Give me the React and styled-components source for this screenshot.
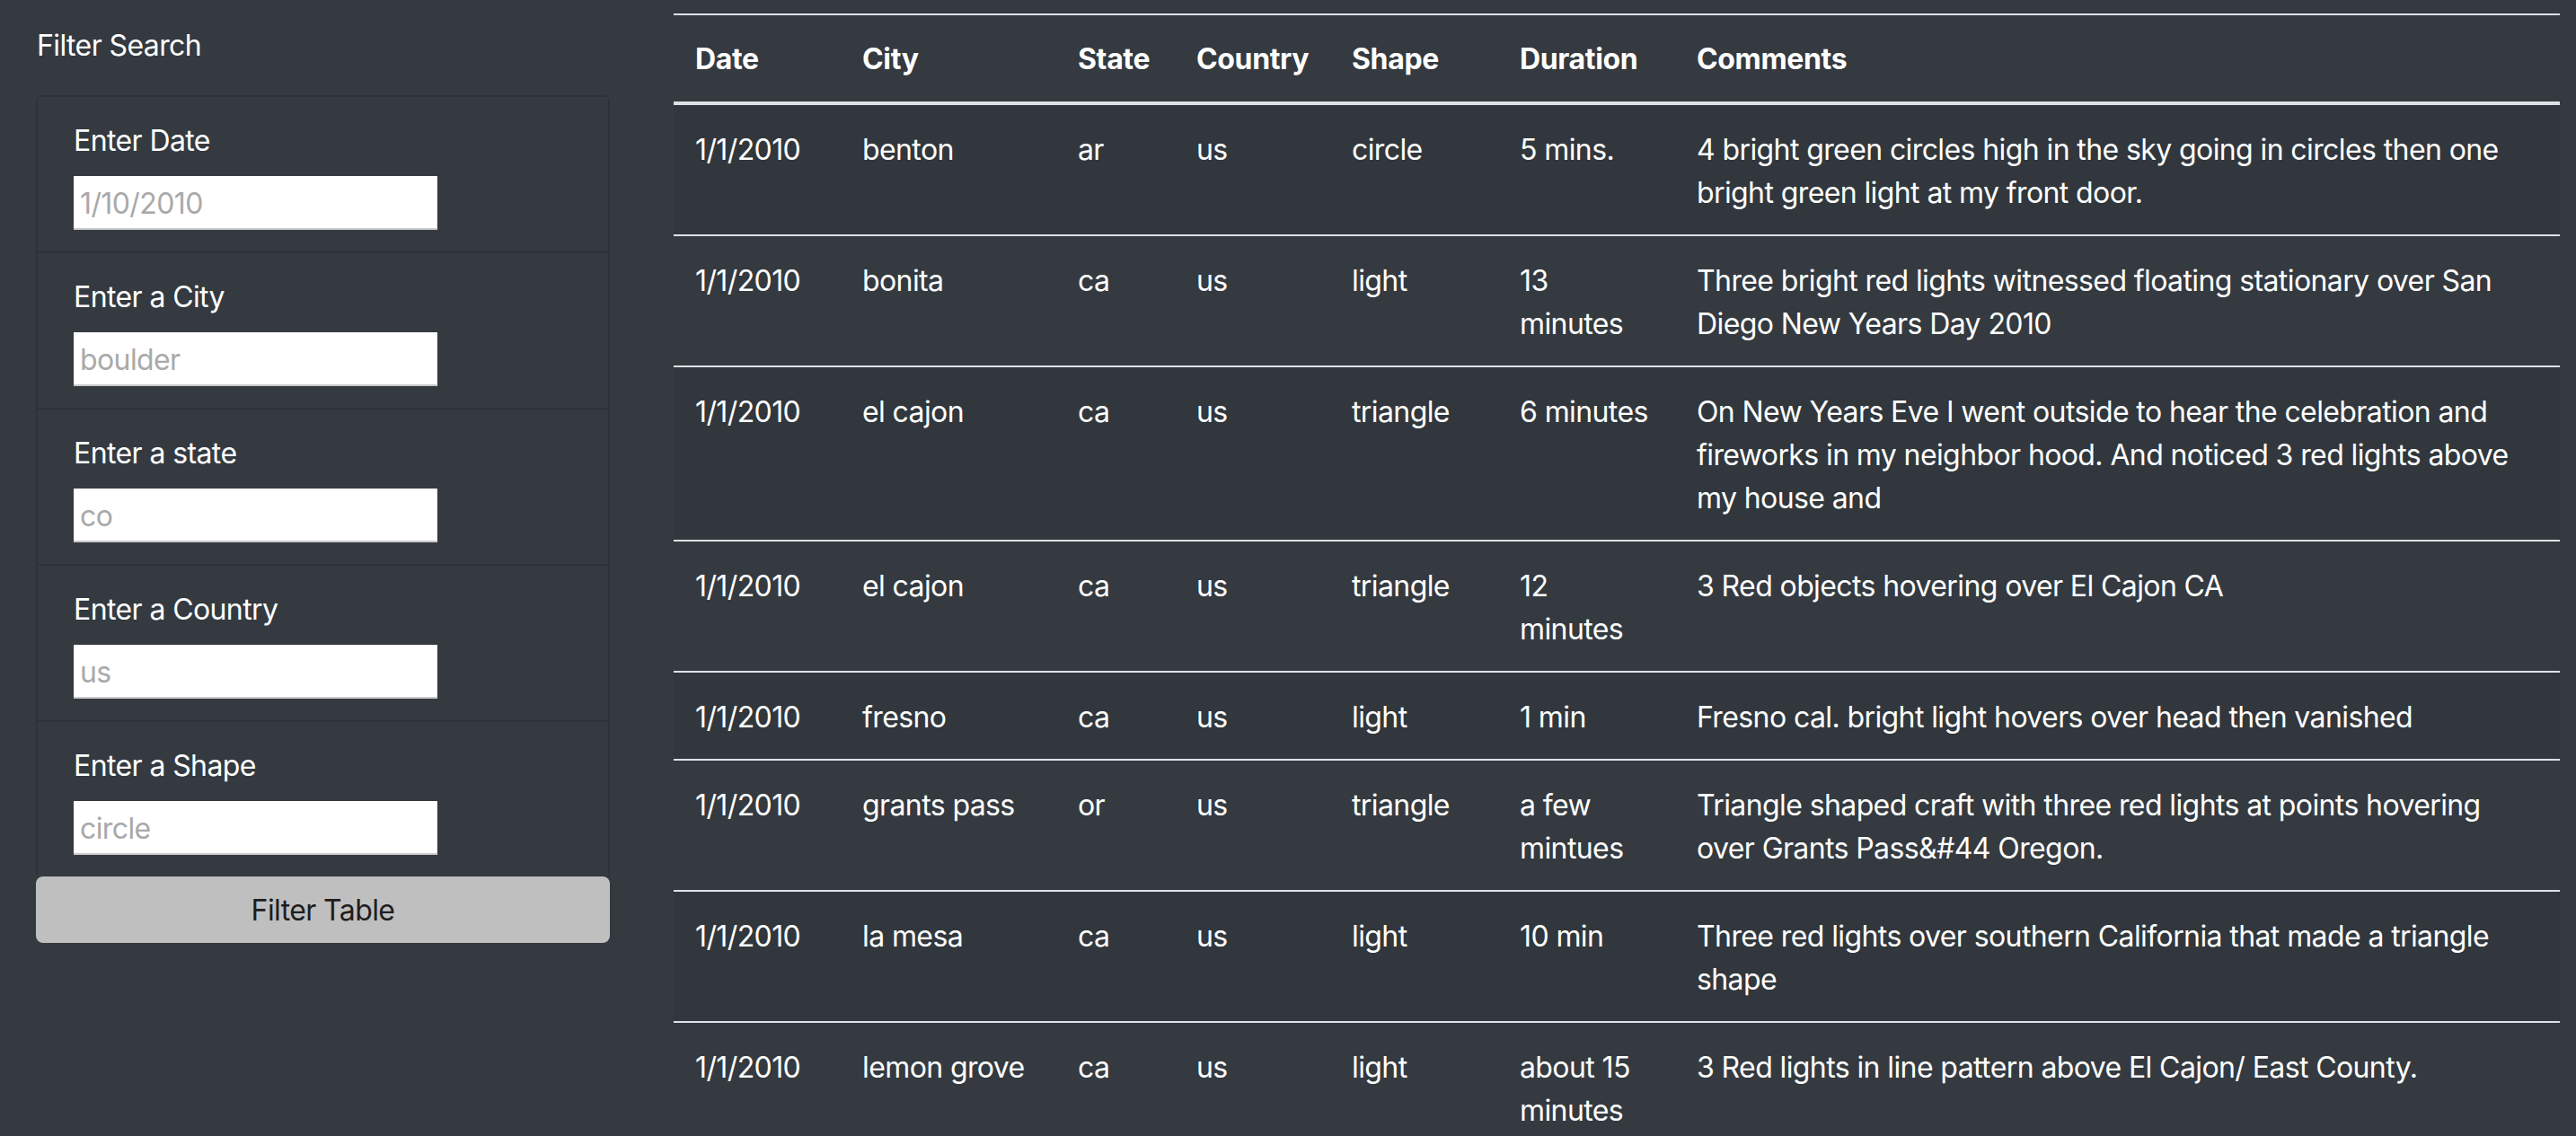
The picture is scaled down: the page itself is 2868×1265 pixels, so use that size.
import React from "react";
import styled, { createGlobalStyle } from "styled-components";

const GlobalStyle = createGlobalStyle`
  html, body {
    margin: 0;
    padding: 0;
    background: #343a40;
  }
  body {
    font-family: Inter, "Open Sans", "Liberation Sans", sans-serif;
    font-size: 32px;
    line-height: 48px;
    letter-spacing: -0.6px;
    color: #fff;
  }
  * {
    box-sizing: border-box;
  }
`;

const filters = [
  { id: "datetime", label: "Enter Date", placeholder: "1/10/2010" },
  { id: "city", label: "Enter a City", placeholder: "boulder" },
  { id: "state", label: "Enter a state", placeholder: "co" },
  { id: "country", label: "Enter a Country", placeholder: "us" },
  { id: "shape", label: "Enter a Shape", placeholder: "circle" },
];

const columns = [
  { name: "Date", width: 186 },
  { name: "City", width: 240 },
  { name: "State", width: 132 },
  { name: "Country", width: 173 },
  { name: "Shape", width: 187 },
  { name: "Duration", width: 197 },
  { name: "Comments", width: 985 },
];

const sightings = [
  ["1/1/2010", "benton", "ar", "us", "circle", "5 mins.", "4 bright green circles high in the sky going in circles then one bright green light at my front door."],
  ["1/1/2010", "bonita", "ca", "us", "light", "13 minutes", "Three bright red lights witnessed floating stationary over San Diego New Years Day 2010"],
  ["1/1/2010", "el cajon", "ca", "us", "triangle", "6 minutes", "On New Years Eve I went outside to hear the celebration and fireworks in my neighbor hood. And noticed 3 red lights above my house and"],
  ["1/1/2010", "el cajon", "ca", "us", "triangle", "12 minutes", "3 Red objects hovering over El Cajon CA"],
  ["1/1/2010", "fresno", "ca", "us", "light", "1 min", "Fresno cal. bright light hovers over head then vanished"],
  ["1/1/2010", "grants pass", "or", "us", "triangle", "a few mintues", "Triangle shaped craft with three red lights at points hovering over Grants Pass&#44 Oregon."],
  ["1/1/2010", "la mesa", "ca", "us", "light", "10 min", "Three red lights over southern California that made a triangle shape"],
  ["1/1/2010", "lemon grove", "ca", "us", "light", "about 15 minutes", "3 Red lights in line pattern above El Cajon/ East County."],
];

const App = () => {
  return (
    <>
      <GlobalStyle />
      <Page>
        <Sidebar>
          <SidebarTitle>Filter Search</SidebarTitle>
          <FilterList>
            {filters.map((f) => (
              <FilterItem key={f.id}>
                <FilterLabel htmlFor={f.id}>{f.label}</FilterLabel>
                <FilterInput id={f.id} type="text" placeholder={f.placeholder} />
              </FilterItem>
            ))}
          </FilterList>
          <FilterButton type="button">Filter Table</FilterButton>
        </Sidebar>
        <TableWrap>
          <UfoTable>
            <colgroup>
              {columns.map((c) => (
                <col key={c.name} style={{ width: c.width }} />
              ))}
            </colgroup>
            <thead>
              <tr>
                {columns.map((c) => (
                  <HeadCell key={c.name}>{c.name}</HeadCell>
                ))}
              </tr>
            </thead>
            <tbody>
              {sightings.map((row, i) => (
                <Row key={i} $striped={i % 2 === 0}>
                  {row.map((cell, j) => (
                    <Cell key={j}>{cell}</Cell>
                  ))}
                </Row>
              ))}
            </tbody>
          </UfoTable>
        </TableWrap>
      </Page>
    </>
  );
};

const Page = styled.div`
  display: flex;
  align-items: flex-start;
  padding: 0 18px 0 40px;
  gap: 71px;
  min-height: 1265px;
`;

const Sidebar = styled.aside`
  width: 639px;
  flex-shrink: 0;
  padding-top: 27px;
  display: flex;
  flex-direction: column;
`;

const SidebarTitle = styled.div`
  padding-left: 1px;
  margin-bottom: 31px;
`;

const FilterList = styled.ul`
  list-style: none;
  margin: 0;
  padding: 0;
  display: flex;
  flex-direction: column;
  border: 2px solid rgba(0, 0, 0, 0.125);
  border-bottom: none;
  border-radius: 8px 8px 0 0;
`;

const FilterItem = styled.li`
  display: flex;
  flex-direction: column;
  align-items: flex-start;
  padding: 24px 40px;
  background: #343a40;
  & + & {
    border-top: 2px solid rgba(0, 0, 0, 0.125);
  }
`;

const FilterLabel = styled.label`
  margin-bottom: 16px;
  transform: translateY(1px);
`;

const FilterInput = styled.input`
  width: 405px;
  height: 60px;
  border: none;
  border-bottom: 2px solid #c9c9c9;
  border-right: 1px solid #e6e6e6;
  background: #fff;
  padding: 2px 7px 0;
  font-family: Inter, "Open Sans", "Liberation Sans", sans-serif;
  font-size: 32px;
  letter-spacing: -0.6px;
  color: #222;
  outline: none;
  &::placeholder {
    color: #a9a9a9;
  }
`;

const FilterButton = styled.button`
  height: 74px;
  width: 100%;
  border: none;
  border-radius: 8px;
  background: #bfbfbf;
  color: #1e1e1e;
  font-family: Inter, "Open Sans", "Liberation Sans", sans-serif;
  font-size: 32px;
  letter-spacing: -0.6px;
  cursor: pointer;
`;

const TableWrap = styled.div`
  flex: 1;
  padding-top: 15px;
`;

const UfoTable = styled.table`
  width: 2100px;
  table-layout: fixed;
  border-collapse: collapse;
  color: #fff;
`;

const HeadCell = styled.th`
  text-align: left;
  font-weight: 700;
  letter-spacing: -0.35px;
  vertical-align: bottom;
  padding: 25px 24px 23px;
  border-top: 2px solid #dee2e6;
  border-bottom: 4px solid #dee2e6;
`;

const Row = styled.tr`
  background: ${(p) => (p.$striped ? "rgba(0, 0, 0, 0.05)" : "transparent")};
`;

const Cell = styled.td`
  vertical-align: top;
  padding: 26px 24px 22px;
  border-top: 2px solid #dee2e6;
`;

export default App;
